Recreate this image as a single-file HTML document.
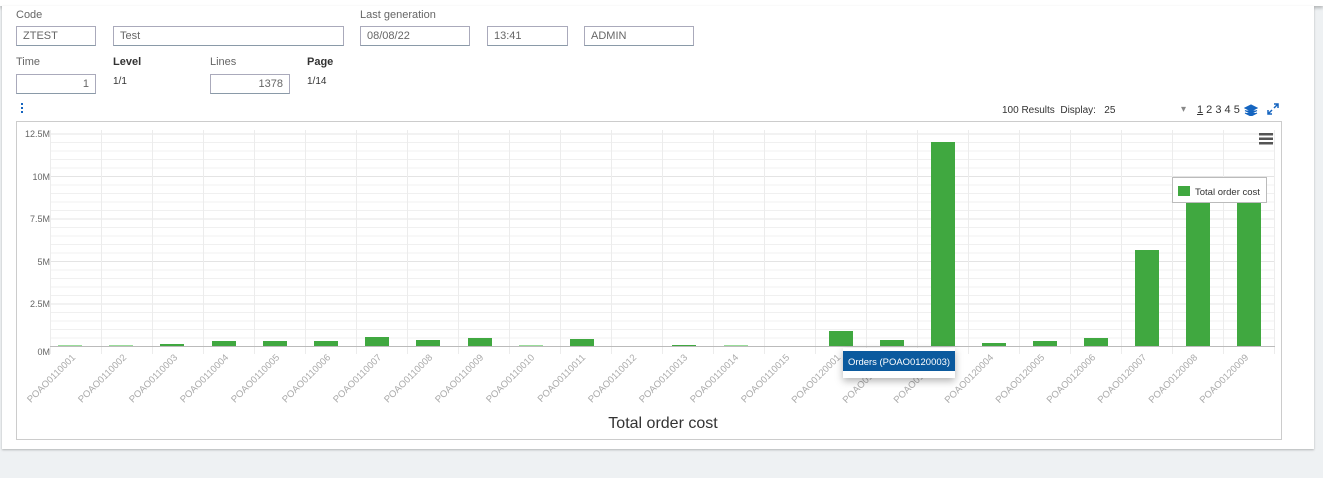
<!DOCTYPE html>
<html><head><meta charset="utf-8"><style>
body{margin:0;width:1323px;height:478px;background:#eef1f3;font-family:"Liberation Sans",sans-serif;position:relative;overflow:hidden}
.panel{position:absolute;left:2px;top:6px;width:1312px;height:443px;background:#fff;box-shadow:0 1px 2px rgba(0,0,0,.25)}
.topbar{position:absolute;left:0;top:0;width:1323px;height:6px;background:#fff;box-shadow:0 2px 3px rgba(0,0,0,.25)}
.lbl{position:absolute;font-size:11px;color:#666}
.b{color:#333;font-weight:bold}
.in{position:absolute;height:20px;border:1px solid #aab;border-bottom:1px solid #8a9aa8;box-sizing:border-box;font-size:11px;color:#666;padding:3px 6px}
.v{position:absolute;font-size:10px;color:#333}
</style></head><body>
<div class="topbar"></div>
<div class="panel"></div>
<div class="lbl" style="left:16px;top:9px">Code</div>
<div class="lbl" style="left:360px;top:9px">Last generation</div>
<div class="in" style="left:16px;top:26px;width:80px">ZTEST</div>
<div class="in" style="left:113px;top:26px;width:231px">Test</div>
<div class="in" style="left:360px;top:26px;width:110px">08/08/22</div>
<div class="in" style="left:487px;top:26px;width:81px">13:41</div>
<div class="in" style="left:584px;top:26px;width:110px">ADMIN</div>
<div class="lbl" style="left:16px;top:56px">Time</div>
<div class="lbl b" style="left:113px;top:56px">Level</div>
<div class="lbl" style="left:210px;top:56px">Lines</div>
<div class="lbl b" style="left:307px;top:56px">Page</div>
<div class="in" style="left:16px;top:74px;width:80px;text-align:right">1</div>
<div class="v" style="left:113px;top:76px">1/1</div>
<div class="in" style="left:210px;top:74px;width:80px;text-align:right">1378</div>
<div class="v" style="left:307px;top:76px">1/14</div>
<div style="position:absolute;left:21px;top:103px;width:2px;height:10px;background:linear-gradient(#1565c0 0 2px,transparent 2px 4px,#1565c0 4px 6px,transparent 6px 8px,#1565c0 8px)"></div>
<div class="v" style="left:1002px;top:105px;font-size:10px">100 Results&nbsp;&nbsp;Display:&nbsp;&nbsp; 25</div>
<div class="v" style="left:1181px;top:104px;color:#888">▾</div>
<div class="v" style="left:1197px;top:104px;font-size:11px"><u>1</u> 2 3 4 5</div>
<svg style="position:absolute;left:1244px;top:104px" width="14" height="12"><path d="M7 1L13 4L7 7L1 4Z M1 6.5L7 9.5L13 6.5 M1 9L7 12L13 9" fill="#1565c0" stroke="#1565c0" stroke-width="1.2"/></svg>
<svg style="position:absolute;left:1267px;top:103px" width="12" height="12"><path d="M7 1H11V5M11 1L7 5M1 7V11H5M1 11L5 7" fill="none" stroke="#1565c0" stroke-width="1.5"/></svg>
<svg style="position:absolute;left:0;top:0" width="1323" height="478">
<rect x="16.5" y="121.5" width="1265" height="318" fill="#fff" stroke="#ccc"/>
<g stroke="#f0f0f0">
<line x1="50" x2="1275" y1="142.5" y2="142.5"/><line x1="50" x2="1275" y1="151" y2="151"/><line x1="50" x2="1275" y1="159.5" y2="159.5"/><line x1="50" x2="1275" y1="168" y2="168"/>
<line x1="50" x2="1275" y1="185" y2="185"/><line x1="50" x2="1275" y1="193.5" y2="193.5"/><line x1="50" x2="1275" y1="202" y2="202"/><line x1="50" x2="1275" y1="210.5" y2="210.5"/>
<line x1="50" x2="1275" y1="227.5" y2="227.5"/><line x1="50" x2="1275" y1="236" y2="236"/><line x1="50" x2="1275" y1="244.5" y2="244.5"/><line x1="50" x2="1275" y1="253" y2="253"/>
<line x1="50" x2="1275" y1="270" y2="270"/><line x1="50" x2="1275" y1="278.5" y2="278.5"/><line x1="50" x2="1275" y1="287" y2="287"/><line x1="50" x2="1275" y1="295.5" y2="295.5"/>
<line x1="50" x2="1275" y1="312.5" y2="312.5"/><line x1="50" x2="1275" y1="321" y2="321"/><line x1="50" x2="1275" y1="329.5" y2="329.5"/><line x1="50" x2="1275" y1="338" y2="338"/>
</g>
<g stroke="#e4e4e4">
<line x1="50" x2="1275" y1="134" y2="134"/><line x1="50" x2="1275" y1="176.5" y2="176.5"/><line x1="50" x2="1275" y1="219" y2="219"/><line x1="50" x2="1275" y1="261.5" y2="261.5"/><line x1="50" x2="1275" y1="304" y2="304"/>
</g>
<g stroke="#ececec">
<path d="M50.5 130V354M101.5 130V354M152.5 130V354M203.5 130V354M254.5 130V354M305.5 130V354M356.5 130V354M407.5 130V354M458.5 130V354M509.5 130V354M560.5 130V354M611.5 130V354M662.5 130V354M713.5 130V354M764.5 130V354M815.5 130V354M866.5 130V354M917.5 130V354M968.5 130V354M1019.5 130V354M1070.5 130V354M1121.5 130V354M1172.5 130V354M1223.5 130V354M1274.5 130V354"/>
</g>
<line x1="50" x2="1275" y1="346.5" y2="346.5" stroke="#bbb"/>
<g font-size="9" fill="#666" text-anchor="end">
<text x="50" y="137">12.5M</text><text x="50" y="180">10M</text><text x="50" y="222">7.5M</text><text x="50" y="265">5M</text><text x="50" y="307">2.5M</text><text x="50" y="355">0M</text>
</g>
<g fill="#40a840">
<rect x="58" y="345" width="24" height="1" fill="#9d9"/><rect x="109" y="345" width="24" height="1" fill="#9d9"/>
<rect x="160" y="344" width="24" height="2"/><rect x="212" y="341" width="24" height="5"/><rect x="263" y="341" width="24" height="5"/><rect x="314" y="341" width="24" height="5"/>
<rect x="365" y="337" width="24" height="9"/><rect x="416" y="340" width="24" height="6"/><rect x="468" y="338" width="24" height="8"/><rect x="519" y="345" width="24" height="1" fill="#9d9"/>
<rect x="570" y="339" width="24" height="7"/><rect x="672" y="345" width="24" height="1"/><rect x="724" y="345" width="24" height="1" fill="#9d9"/>
<rect x="829" y="331" width="24" height="15"/><rect x="880" y="340" width="24" height="6"/><rect x="931" y="142" width="24" height="204"/>
<rect x="982" y="343" width="24" height="3"/><rect x="1033" y="341" width="24" height="5"/><rect x="1084" y="338" width="24" height="8"/>
<rect x="1135" y="250" width="24" height="96"/><rect x="1186" y="190" width="24" height="156"/><rect x="1237" y="190" width="24" height="156"/>
</g>
<g font-size="9.5" fill="#aaa" text-anchor="end">
<text transform="translate(76,358) rotate(-45)">POAO0110001</text>
<text transform="translate(127,358) rotate(-45)">POAO0110002</text>
<text transform="translate(178,358) rotate(-45)">POAO0110003</text>
<text transform="translate(229,358) rotate(-45)">POAO0110004</text>
<text transform="translate(280,358) rotate(-45)">POAO0110005</text>
<text transform="translate(331,358) rotate(-45)">POAO0110006</text>
<text transform="translate(382,358) rotate(-45)">POAO0110007</text>
<text transform="translate(433,358) rotate(-45)">POAO0110008</text>
<text transform="translate(484,358) rotate(-45)">POAO0110009</text>
<text transform="translate(535,358) rotate(-45)">POAO0110010</text>
<text transform="translate(586,358) rotate(-45)">POAO0110011</text>
<text transform="translate(637,358) rotate(-45)">POAO0110012</text>
<text transform="translate(688,358) rotate(-45)">POAO0110013</text>
<text transform="translate(739,358) rotate(-45)">POAO0110014</text>
<text transform="translate(790,358) rotate(-45)">POAO0110015</text>
<text transform="translate(841,358) rotate(-45)">POAO0120001</text>
<text transform="translate(892,358) rotate(-45)">POAO0120002</text>
<text transform="translate(943,358) rotate(-45)">POAO0120003</text>
<text transform="translate(994,358) rotate(-45)">POAO0120004</text>
<text transform="translate(1045,358) rotate(-45)">POAO0120005</text>
<text transform="translate(1096,358) rotate(-45)">POAO0120006</text>
<text transform="translate(1147,358) rotate(-45)">POAO0120007</text>
<text transform="translate(1198,358) rotate(-45)">POAO0120008</text>
<text transform="translate(1249,358) rotate(-45)">POAO0120009</text>
</g>
<text x="663" y="428" font-size="16" fill="#333" text-anchor="middle">Total order cost</text>
<g fill="#555"><rect x="1259" y="133" width="14" height="2.5"/><rect x="1259" y="137.5" width="14" height="2.5"/><rect x="1259" y="142" width="14" height="2.5"/></g>
<rect x="1172.5" y="177.5" width="94" height="25" fill="#fff" stroke="#bbb"/>
<rect x="1178" y="186" width="12" height="10" fill="#40a840"/>
<text x="1195" y="195" font-size="9.5" fill="#333">Total order cost</text>
<rect x="843" y="348" width="112" height="30" fill="#fff" style="filter:drop-shadow(0 3px 4px rgba(0,0,0,.3))"/>
<rect x="843" y="351" width="112" height="20" fill="#0b5a9e"/>
<text x="848" y="365" font-size="9" fill="#fff" textLength="102" lengthAdjust="spacingAndGlyphs">Orders (POAO0120003)</text>
</svg>
</body></html>
